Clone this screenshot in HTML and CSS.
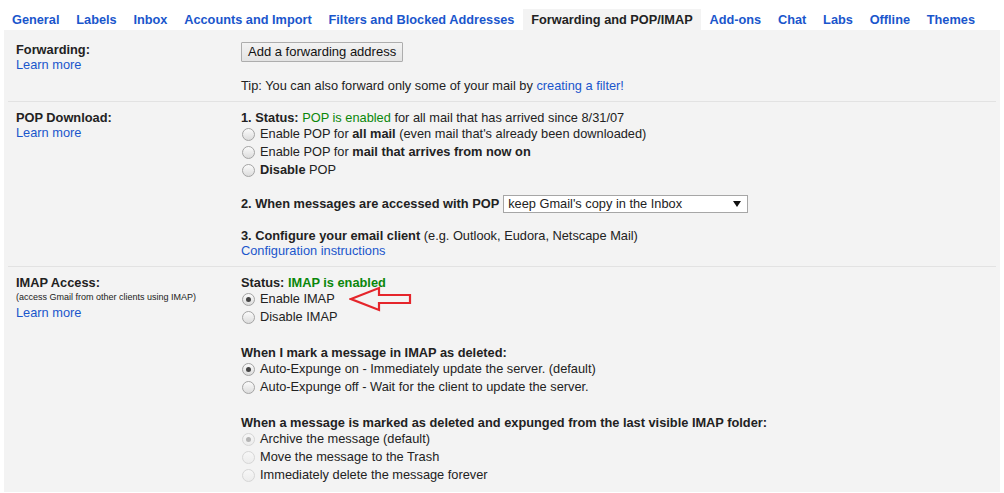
FILE: index.html
```html
<!DOCTYPE html>
<html>
<head>
<meta charset="utf-8">
<link rel="stylesheet" href="styles.css">
</head>
<body>
<nav class="tabs">
  <a class="tab">General</a>
  <a class="tab">Labels</a>
  <a class="tab">Inbox</a>
  <a class="tab">Accounts and Import</a>
  <a class="tab">Filters and Blocked Addresses</a>
  <a class="tab active">Forwarding and POP/IMAP</a>
  <a class="tab">Add-ons</a>
  <a class="tab">Chat</a>
  <a class="tab">Labs</a>
  <a class="tab">Offline</a>
  <a class="tab">Themes</a>
</nav>
<div class="panel">
  <section class="row row-fwd">
    <div class="label">
      <div class="title">Forwarding:</div>
      <a class="link">Learn more</a>
    </div>
    <div class="content">
      <button class="btn">Add a forwarding address</button>
      <div class="tip">Tip: You can also forward only some of your mail by <a class="link">creating a filter!</a></div>
    </div>
  </section>

  <section class="row row-pop">
    <div class="label">
      <div class="title">POP Download:</div>
      <a class="link">Learn more</a>
    </div>
    <div class="content">
      <div class="status"><b>1. Status: </b><span class="ok">POP is enabled</span> for all mail that has arrived since 8/31/07</div>
      <div class="opt"><input type="radio" class="radio" name="pop"><span>Enable POP for <b>all mail</b> (even mail that's already been downloaded)</span></div>
      <div class="opt"><input type="radio" class="radio" name="pop"><span>Enable POP for <b>mail that arrives from now on</b></span></div>
      <div class="opt"><input type="radio" class="radio" name="pop"><span><b>Disable</b> POP</span></div>
      <div class="selrow"><b>2. When messages are accessed with POP</b>
        <div class="select"><span>keep Gmail's copy in the Inbox</span><svg class="caret" width="8" height="6" viewBox="0 0 8 6"><path d="M0 0H8L4 6Z" fill="#111"/></svg></div>
      </div>
      <div class="para"><b>3. Configure your email client</b> (e.g. Outlook, Eudora, Netscape Mail)<br><a class="link">Configuration instructions</a></div>
    </div>
  </section>

  <section class="row row-imap">
    <div class="label">
      <div class="title">IMAP Access:</div>
      <div class="small">(access Gmail from other clients using IMAP)</div>
      <a class="link">Learn more</a>
    </div>
    <div class="content">
      <div class="status"><b>Status: </b><b class="ok">IMAP is enabled</b></div>
      <div class="opt"><input type="radio" class="radio" name="imap" checked><span>Enable IMAP</span>
        <svg class="arrow" width="64" height="26" viewBox="0 0 64 26"><path d="M2 13 L30 2 L30 9 L61 9 L61 17 L30 17 L30 24 Z" fill="none" stroke="#e5252b" stroke-width="2.2" stroke-linejoin="miter"/></svg>
      </div>
      <div class="opt"><input type="radio" class="radio" name="imap"><span>Disable IMAP</span></div>
      <div class="heading">When I mark a message in IMAP as deleted:</div>
      <div class="opt"><input type="radio" class="radio" name="exp" checked><span>Auto-Expunge on - Immediately update the server. (default)</span></div>
      <div class="opt"><input type="radio" class="radio" name="exp"><span>Auto-Expunge off - Wait for the client to update the server.</span></div>
      <div class="heading">When a message is marked as deleted and expunged from the last visible IMAP folder:</div>
      <div class="opt"><input type="radio" class="radio" name="del" checked disabled><span>Archive the message (default)</span></div>
      <div class="opt"><input type="radio" class="radio" name="del" disabled><span>Move the message to the Trash</span></div>
      <div class="opt"><input type="radio" class="radio" name="del" disabled><span>Immediately delete the message forever</span></div>
    </div>
  </section>
</div>
</body>
</html>
```

FILE: styles.css
```css
html, body {
  margin: 0;
  padding: 0;
  background: #fff;
}
body {
  font-family: "Liberation Sans", Arial, sans-serif;
  font-size: 12.8px;
  color: #222;
}
b { font-weight: bold; }

.tabs {
  display: flex;
  margin-top: 9px;
  padding-left: 3.6px;
  height: 21px;
}
.tab {
  padding: 0 8.4px;
  line-height: 21px;
  font-size: 12.75px;
  font-weight: bold;
  color: #1a56cc;
  white-space: nowrap;
}
.tab.active {
  color: #222;
  background: #f3f3f3;
}

.panel {
  background: #f3f3f3;
  margin: 0 4px;
  padding-top: 4px;
  padding-bottom: 8px;
}

.row {
  display: grid;
  grid-template-columns: 225px 1fr;
  margin: 0 4px;
  padding: 8px 0 8px 8px;
  border-bottom: 1px solid #e2e2e2;
}
.row-imap { border-bottom: none; padding-bottom: 0; }

.label { line-height: 15px; }
.title { font-weight: bold; }
.small {
  font-size: 9px;
  line-height: 15px;
}
.link {
  color: #1a56cc;
  cursor: pointer;
}

.content { line-height: 14px; }

.btn {
  display: block;
  height: 20px;
  box-sizing: border-box;
  padding: 0 6px;
  margin: 0;
  font-family: inherit;
  font-size: 13px;
  color: #111;
  border: 1px solid #adadad;
  border-radius: 1px;
  background: linear-gradient(#f3f3f3, #e3e3e3);
  line-height: 18px;
}
.tip { margin-top: 17px; }

.status { line-height: 15px; }
.ok { color: #0a870a; }

.opt {
  display: flex;
  align-items: center;
  height: 18px;
  white-space: nowrap;
}
.radio {
  appearance: none;
  -webkit-appearance: none;
  width: 13px;
  height: 13px;
  box-sizing: border-box;
  margin: 0 5px 0 1px;
  border: 1px solid #a4a4a4;
  border-radius: 50%;
  background: linear-gradient(#fbfbfb, #dcdcdc);
  display: grid;
  place-content: center;
  flex: none;
}
.radio:checked::before {
  content: "";
  width: 5px;
  height: 5px;
  border-radius: 50%;
  background: #444;
}
.radio:disabled {
  border-color: #d6d6d6;
  background: linear-gradient(#f7f7f7, #ececec);
}
.radio:disabled:checked::before { background: #b4b4b4; }

.arrow {
  margin: -4px 0 -4px 14px;
  flex: none;
}

.selrow {
  display: flex;
  align-items: center;
  height: 20px;
  margin-top: 15px;
}
.select {
  display: flex;
  align-items: center;
  justify-content: space-between;
  width: 245px;
  height: 18px;
  box-sizing: border-box;
  margin-left: 4px;
  padding: 0 6px 0 4px;
  background: #fff;
  border: 1px solid #a6a6a6;
  font-weight: normal;
}
.para {
  margin-top: 14px;
  line-height: 15px;
}

.heading {
  font-weight: bold;
  line-height: 15px;
  margin-top: 19px;
}
```
